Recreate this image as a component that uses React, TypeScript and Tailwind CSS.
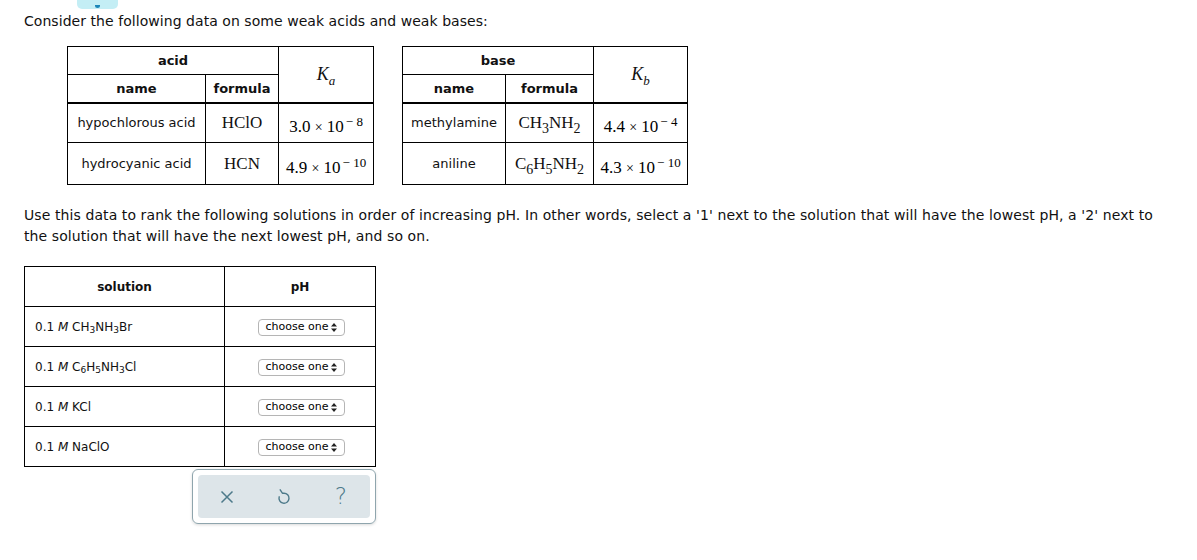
import React from 'react';

const sans = { fontFamily: '"DejaVu Sans", Verdana, sans-serif' };
const serif = { fontFamily: '"Liberation Serif", "Times New Roman", serif' };

const Sci = ({ m, e }: { m: string; e: string }) => (
    <span className="text-[17px] text-black whitespace-nowrap relative top-[4px]" style={serif}>
        {m} <span className="text-[14px]">×</span> 10<sup className="relative -top-[6px] text-[13px] ml-[2px]">− {e}</sup>
    </span>
);

const Select = () => (
    <span className="inline-flex items-center h-[17px] px-[7px] border border-[#b5b5b5] rounded-[4px] text-[11px] text-black bg-white" style={sans}>
        choose one
        <svg width="6" height="9" viewBox="0 0 6 9" className="ml-[3px]">
            <path d="M0 3.5 L3 0 L6 3.5 Z M0 5.5 L3 9 L6 5.5 Z" fill="#222" />
        </svg>
    </span>
);

const DataTable = ({
    title, kLabel, cols, rows,
}: {
    title: string;
    kLabel: string;
    cols: number[];
    rows: { name: string; formula: React.ReactNode; k: React.ReactNode; h: number }[];
}) => (
    <table className="border-collapse text-[13px]" style={sans}>
        <tbody>
            <tr className="h-[28px]">
                <td colSpan={2} className="border border-black text-center font-bold">{title}</td>
                <td rowSpan={2} className="border border-black border-b-2 text-center" style={{ width: cols[2] }}>
                    <span className="italic text-[18px]" style={serif}>K<sub className="text-[13px] relative top-[5px]">{kLabel}</sub></span>
                </td>
            </tr>
            <tr className="h-[28px]">
                <td className="border border-black border-b-2 text-center font-bold" style={{ width: cols[0] }}>name</td>
                <td className="border border-black border-b-2 text-center font-bold" style={{ width: cols[1] }}>formula</td>
            </tr>
            {rows.map((r) => (
                <tr key={r.name} style={{ height: r.h }}>
                    <td className="border border-black text-center px-[4px] whitespace-nowrap">{r.name}</td>
                    <td className="border border-black text-center text-[17px] whitespace-nowrap" style={serif}>{r.formula}</td>
                    <td className="border border-black text-center">{r.k}</td>
                </tr>
            ))}
        </tbody>
    </table>
);

const sub = (s: string) => <sub className="text-[14px] relative top-[5px]">{s}</sub>;
const ssub = (s: string) => <sub className="text-[9px]">{s}</sub>;

export default function App() {
    const solutions = [
        <>0.1 <i>M</i> CH{ssub('3')}NH{ssub('3')}Br</>,
        <>0.1 <i>M</i> C{ssub('6')}H{ssub('5')}NH{ssub('3')}Cl</>,
        <>0.1 <i>M</i> KCl</>,
        <>0.1 <i>M</i> NaClO</>,
    ];

    return (
        <div className="w-[1197px] h-[560px] bg-white text-[#111] relative overflow-hidden" style={sans}>
            <div className="absolute left-[77px] top-0 w-[41px] h-[9px] bg-[#c4eef5] rounded-b-[5px] flex justify-center items-end">
                <div className="w-[5px] h-[3px] bg-[#1b86b8] rounded-b-full mb-[1px]" />
            </div>

            <div className="pl-[24px] pt-[11px]">
                <p className="text-[14px] leading-[21px] tracking-[0.05px]">Consider the following data on some weak acids and weak bases:</p>

                <div className="flex gap-[28px] ml-[43px] mt-[14px]">
                    <DataTable
                        title="acid"
                        kLabel="a"
                        cols={[138, 73, 95]}
                        rows={[
                            { name: 'hypochlorous acid', formula: 'HClO', k: <Sci m="3.0" e="8" />, h: 40 },
                            { name: 'hydrocyanic acid', formula: 'HCN', k: <Sci m="4.9" e="10" />, h: 42 },
                        ]}
                    />
                    <DataTable
                        title="base"
                        kLabel="b"
                        cols={[103, 88, 94]}
                        rows={[
                            { name: 'methylamine', formula: <>CH{sub('3')}NH{sub('2')}</>, k: <Sci m="4.4" e="4" />, h: 40 },
                            { name: 'aniline', formula: <>C{sub('6')}H{sub('5')}NH{sub('2')}</>, k: <Sci m="4.3" e="10" />, h: 42 },
                        ]}
                    />
                </div>

                <p className="text-[14px] leading-[21px] tracking-[0.09px] mt-[20px] w-[1150px]">
                    Use this data to rank the following solutions in order of increasing pH. In other words, select a '1' next to the solution that will have the lowest pH, a '2' next to the solution that will have the next lowest pH, and so on.
                </p>

                <table className="border-collapse mt-[19px] text-[12px]">
                    <tbody>
                        <tr className="h-[40px]">
                            <td className="border border-black w-[200px] text-center font-bold">solution</td>
                            <td className="border border-black w-[151px] text-center font-bold">pH</td>
                        </tr>
                        {solutions.map((s, i) => (
                            <tr key={i} className="h-[40px]">
                                <td className="border border-black pl-[10px] whitespace-nowrap">{s}</td>
                                <td className="border border-black text-center pl-[3px]"><Select /></td>
                            </tr>
                        ))}
                    </tbody>
                </table>

                <div className="ml-[168px] mt-[2px] w-[184px] h-[55px] border border-[#8fa5ad] rounded-[6px] p-[5px] shadow-[0_1px_3px_rgba(0,0,0,0.15)]">
                    <div className="w-full h-full bg-[#dde5e9] rounded-[4px] flex items-center justify-between pl-[22px] pr-[23px] text-[#4d7a8a]">
                        <svg width="14" height="14" viewBox="0 0 14 14">
                            <path d="M1.5 1.5 L12.5 12.5 M12.5 1.5 L1.5 12.5" stroke="currentColor" strokeWidth="1.5" fill="none" />
                        </svg>
                        <svg width="14" height="17" viewBox="0 0 14 17">
                            <path d="M3.2 1.8 L5.4 5.2 L7 5.2 A5 5 0 1 1 2.2 8.8" stroke="currentColor" strokeWidth="1.4" fill="none" strokeLinecap="round" strokeLinejoin="round" />
                        </svg>
                        <span className="text-[23px] leading-none" style={{ fontFamily: '"DejaVu Sans", sans-serif', fontWeight: 200 }}>?</span>
                    </div>
                </div>
            </div>
        </div>
    );
}
